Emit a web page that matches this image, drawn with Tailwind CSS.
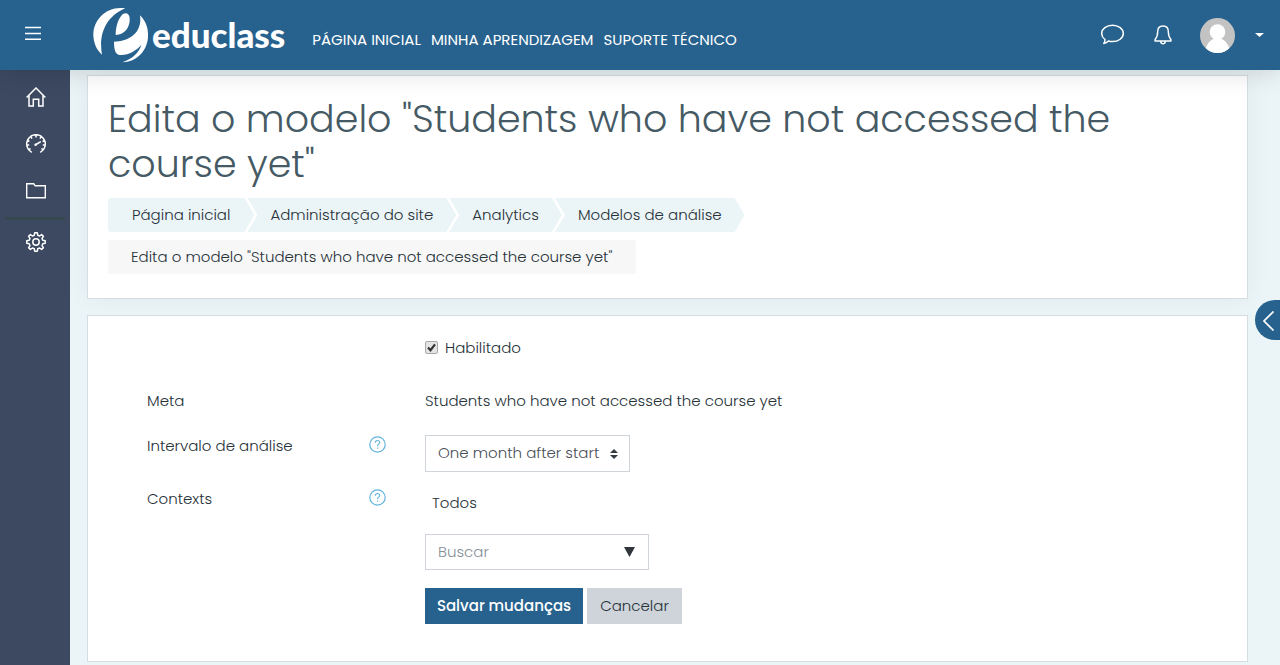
<!DOCTYPE html>
<html lang="pt-BR">
<head>
    <meta charset="UTF-8">
    <meta name="viewport" content="width=device-width, initial-scale=1.0">
    <title>Edita o modelo - educlass</title>
    <script src="https://cdn.jsdelivr.net/npm/@tailwindcss/browser@4"></script>
    <style>
        body {
            font-family: Poppins, Inter, "Liberation Sans", sans-serif;
        }
        .crumb-first {
            clip-path: polygon(0 0, calc(100% - 10px) 0, 100% 50%, calc(100% - 10px) 100%, 0 100%);
        }
        .crumb {
            clip-path: polygon(0 0, calc(100% - 10px) 0, 100% 50%, calc(100% - 10px) 100%, 0 100%, 10px 50%);
        }
    </style>
</head>
<body class="min-h-screen flex flex-col bg-[#ebf4f7] text-[15px] leading-[23px] font-light text-[#263238] overflow-x-hidden">
    <header class="relative z-10 h-[70px] shrink-0 flex items-center bg-[#27628e] text-white shadow-[0_2px_26px_rgba(0,0,0,0.15)]">
        <button type="button" aria-label="Menu" class="w-[70px] pl-[25px] pb-1">
            <svg class="w-4 h-[14px]" viewBox="0 0 16 14" stroke="currentColor" stroke-width="1.4"><path d="M0 1.5h16M0 7.5h16M0 13.3h16"/></svg>
        </button>
        <a href="#" class="flex items-center ml-[23px]">
            <svg class="w-[56px] h-[56px]" viewBox="279 22 168 168" fill="currentColor">
                <path d="M376 26C322 17 279 58 280 107c1 24 10 45 26 58C297 116 308 55 376 26z"/>
                <path d="M347 106c0-22 6-45 17-58c10-12 24-8 25 8c2 25-14 50-42 50z"/>
                <path d="M420 47c18 18 26 40 24 66c-3 41-33 74-77 75c32-11 50-30 57-52c-13 15-37 30-60 30c-16 0-22-10-22-40c42 0 86-24 78-79z"/>
            </svg>
            <span class="ml-[3px] pb-[2px] font-[Lato] font-black text-[35px] leading-[48px]">educlass</span>
        </a>
        <nav class="flex gap-[10px] ml-[27px] pt-2 text-[15px] leading-[23px] font-normal">
            <a href="#">PÁGINA INICIAL</a>
            <a href="#">MINHA APRENDIZAGEM</a>
            <a href="#">SUPORTE TÉCNICO</a>
        </nav>
        <div class="flex items-center ml-auto pr-4">
            <button type="button" aria-label="Mensagens">
                <svg class="w-6 h-6" viewBox="0 0 24 24" fill="none" stroke="currentColor" stroke-width="1.5" stroke-linejoin="round"><path d="M11.500 2.200c6 0 10.800 3.600 10.800 8.200s-4.800 8.200-10.800 8.200c-1.500 0-2.900-.2-4.100-.6c-1.200 1.300-2.700 2.200-4.600 2.500c.8-1.200 1.200-2.500 1.200-4C2 15 .7 12.800 .7 10.400C.7 5.800 5.500 2.200 11.500 2.200z"/></svg>
            </button>
            <button type="button" aria-label="Notificações" class="ml-[29px]">
                <svg class="w-[18px] h-5" viewBox="0 0 18 20" fill="none" stroke="currentColor" stroke-width="1.4" stroke-linejoin="round"><path d="M9 1C5.500 1 3.700 3.300 3.700 6.500C3.700 11.500 2.600 13 1 14.700V16h16v-1.300C15.400 13 14.300 11.500 14.300 6.500C14.300 3.300 12.500 1 9 1zM6.500 16.200c.3 1.700 1.200 2.700 2.500 2.700s2.200-1 2.500-2.700"/></svg>
            </button>
            <button type="button" aria-label="Menu do usuário" class="flex items-center ml-7">
                <svg class="w-[35px] h-[35px] rounded-full" viewBox="0 0 35 35"><path fill="#c3c3c3" d="M0 0h35v35H0z"/><circle cx="17.500" cy="14" r="7.800" fill="#fff"/><path fill="#fff" d="M5 35c0-6 3-11 8-14h9c5 3 8 8 8 14z"/></svg>
                <svg class="w-[9px] h-1 ml-5" viewBox="0 0 9 4" fill="currentColor"><path d="M0 0h9L4.500 4z"/></svg>
            </button>
        </div>
    </header>

    <div class="flex flex-1">
        <aside class="w-[70px] shrink-0 flex flex-col items-center pt-[17px] pl-[2px] bg-[#3c4961] text-white">
            <a href="#" aria-label="Página inicial">
                <svg class="w-5 h-5" viewBox="0 0 20 20" fill="none" stroke="currentColor" stroke-width="1.5"><path d="M.6 10.500L10 1l9.400 9.500M3 8.500V19h4.300v-6.700h5.400V19H17V8.500"/></svg>
            </a>
            <a href="#" aria-label="Painel" class="mt-[27px]">
                <svg class="w-5 h-5" viewBox="0 0 20 20" fill="none" stroke="currentColor" stroke-width="1.500"><path d="M5.800 18.300a9.300 9.300 0 1 1 8.400 0M10 1v2.400M5 2.800l1 1.800M15 2.800l-1 1.800M1.600 6.500l1.800 1M1 11h2.200M19 11h-2.200M3 15.500l1.600-.8M17 15.500l-1.600-.8M18.400 6.500l-1.800 1M10 10.500l4.800-2.800"/><circle cx="9.600" cy="10.700" r="1.300" fill="currentColor" stroke="none"/></svg>
            </a>
            <a href="#" aria-label="Arquivos" class="mt-[27px]">
                <svg class="w-5 h-5" viewBox="0 0 20 20" fill="none" stroke="currentColor" stroke-width="1.400"><path d="M.7 16.800V2.800h7l1.500 2h10.100v12z"/></svg>
            </a>
            <hr class="w-[60px] mt-4 mr-[2px] border-0 h-[3px] bg-[#37474f]">
            <a href="#" aria-label="Administração do site" class="mt-3">
                <svg class="w-5 h-5" viewBox="0 0 20 20" fill="none" stroke="currentColor" stroke-width="1.500" stroke-linejoin="round"><path d="M8.300 3.200L8.700.8h2.600l.4 2.400l1.900.8l2-1.400l1.800 1.800l-1.400 2l.8 1.900l2.400.4v2.600l-2.400.4l-.8 1.900l1.400 2l-1.800 1.800l-2-1.400l-1.900.8l-.4 2.400H8.700l-.4-2.400l-1.900-.8l-2 1.400l-1.800-1.800l1.400-2l-.8-1.900l-2.400-.4V8.700l2.400-.4L4 6.400l-1.400-2l1.800-1.800l2 1.400z"/><circle cx="10" cy="10" r="3.200"/></svg>
            </a>
        </aside>

        <main class="flex-1 min-w-0 pt-[5px] pl-[17px] pr-8 pb-[3px]">
            <section class="bg-white border border-[#d5dee2] px-5 pt-5 pb-6 shadow-[0_0_24px_rgba(0,0,0,0.05)]">
                <h1 class="text-[38px] leading-[45px] text-[#455a64]">Edita o modelo "Students who have not accessed the course yet"</h1>
                <ol class="flex flex-wrap mt-3 gap-y-2 leading-[34px]">
                    <li><a href="#" class="crumb-first block rounded-l-[3px] bg-[#ebf4f7] px-6">Página inicial</a></li>
                    <li class="-ml-[7px]"><a href="#" class="crumb block bg-[#ebf4f7] px-[23px]">Administração do site</a></li>
                    <li class="-ml-[7px]"><a href="#" class="crumb block bg-[#ebf4f7] px-[23px]">Analytics</a></li>
                    <li class="-ml-[7px]"><a href="#" class="crumb block bg-[#ebf4f7] px-[23px]">Modelos de análise</a></li>
                    <li class="basis-full"><a href="#" class="inline-block rounded-r-[3px] bg-[#f7f7f7] pl-[23px] pr-6">Edita o modelo "Students who have not accessed the course yet"</a></li>
                </ol>
            </section>

            <section class="mt-4 bg-white border border-[#d5dee2] pl-[59px] pr-5 pt-5 pb-[37px]">
                <form class="grid grid-cols-[239px_1fr] gap-x-[39px]">
                    <label class="col-start-2 flex items-center gap-[7px] mb-[30px]">
                        <span class="relative">
                            <input type="checkbox" checked class="peer block appearance-none w-[13px] h-[13px] rounded-[2px] border border-[#a9a9a9] bg-[#e4e4e4]">
                            <svg class="absolute inset-0 w-[13px] h-[13px] hidden peer-checked:block pointer-events-none" viewBox="0 0 13 13" fill="none" stroke="#333" stroke-width="2.200"><path d="M3 6.500l2.500 2.700L10 3.300"/></svg>
                        </span>
                        Habilitado
                    </label>

                    <span>Meta</span>
                    <span>Students who have not accessed the course yet</span>

                    <div class="flex justify-between mt-[22px]">
                        <label for="timesplitting">Intervalo de análise</label>
                        <button type="button" aria-label="Ajuda com Intervalo de análise" class="self-start mt-[2px]">
                            <svg class="w-[17px] h-[17px]" viewBox="0 0 17 17" fill="none" stroke="#62b4dc"><circle cx="8.500" cy="8.500" r="7.700" stroke-width="1.200"/><path d="M6.300 6.700c0-1.500.9-2.200 2.200-2.200s2.200.8 2.200 2c0 1.600-2.100 1.700-2.100 3.300v.5M8.600 11.500v1.300" stroke-width="1.100"/></svg>
                        </button>
                    </div>
                    <div class="relative mt-[23px] justify-self-start">
                        <select id="timesplitting" class="block appearance-none w-[205px] h-[37px] pl-3 pb-[2px] border border-[#ced4da] text-[#495057]">
                            <option>One month after start</option>
                        </select>
                        <svg class="absolute right-3 top-[14px] w-2 h-[10px] pointer-events-none" viewBox="0 0 8 10" fill="#343a40"><path d="M0 4h8L4 0zM0 6h8L4 10z"/></svg>
                    </div>

                    <div class="flex justify-between items-start mt-[15px]">
                        <label for="contexts">Contexts</label>
                        <button type="button" aria-label="Ajuda com Contexts" class="mt-[2px]">
                            <svg class="w-[17px] h-[17px]" viewBox="0 0 17 17" fill="none" stroke="#62b4dc"><circle cx="8.500" cy="8.500" r="7.700" stroke-width="1.200"/><path d="M6.300 6.700c0-1.500.9-2.200 2.200-2.200s2.200.8 2.200 2c0 1.600-2.100 1.700-2.100 3.300v.5M8.600 11.500v1.300" stroke-width="1.100"/></svg>
                        </button>
                    </div>
                    <div class="mt-[19px]">
                        <p class="pl-[7px]">Todos</p>
                        <div class="relative w-[224px] mt-5">
                            <input id="contexts" type="text" placeholder="Buscar" class="block w-full h-9 px-3 pb-[2px] border border-[#ced4da] placeholder:text-[#868e96]">
                            <svg class="absolute right-[14px] top-[13px] w-[11px] h-[10px] pointer-events-none" viewBox="0 0 11 10" fill="#2f353a"><path d="M0 0h11L5.500 10z"/></svg>
                        </div>
                    </div>

                    <div class="col-start-2 flex gap-1 mt-[18px]">
                        <button type="submit" class="h-9 w-[158px] pb-[2px] bg-[#27628e] text-white font-medium">Salvar mudanças</button>
                        <button type="button" class="h-9 w-[95px] pb-[2px] bg-[#ced4da]">Cancelar</button>
                    </div>
                </form>
            </section>
        </main>
    </div>

    <button type="button" aria-label="Abrir painel" class="fixed right-0 top-[300px] w-[25px] h-10 rounded-l-full bg-[#27628e] text-white">
        <svg class="w-[11px] h-5 ml-2 mt-[2px]" viewBox="0 0 11 20" fill="none" stroke="currentColor" stroke-width="1.700"><path d="M10.500 0.500L1 10l9.500 9.500"/></svg>
    </button>
</body>
</html>
